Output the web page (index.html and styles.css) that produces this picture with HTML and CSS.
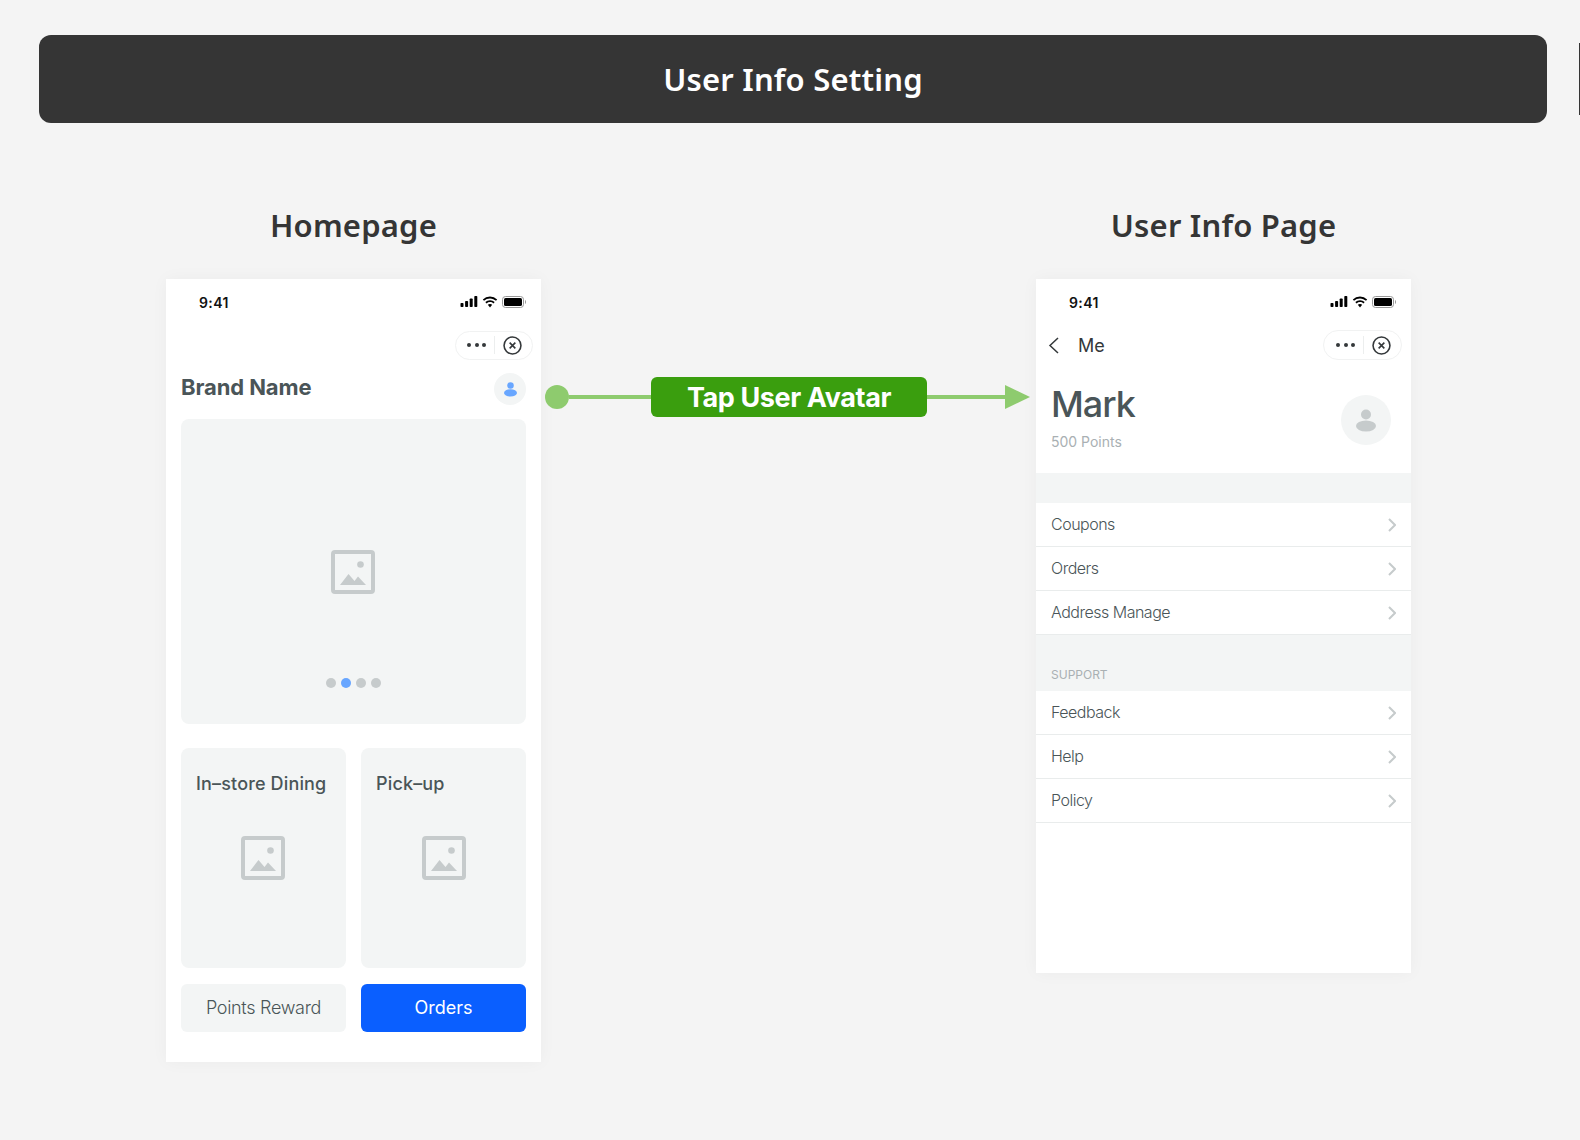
FILE: index.html
```html
<!DOCTYPE html>
<html lang="en">
<head>
<meta charset="utf-8">
<title>User Info Setting</title>
<link rel="stylesheet" href="styles.css">
</head>
<body>
<svg class="defs" width="0" height="0">
  <defs>
    <symbol id="signal" viewBox="0 0 17 11"><rect x="0" y="7" width="3" height="4" rx="0.8"/><rect x="4.6" y="5" width="3" height="6" rx="0.8"/><rect x="9.2" y="2.5" width="3" height="8.5" rx="0.8"/><rect x="13.8" y="0" width="3" height="11" rx="0.8"/></symbol>
    <symbol id="wifi" viewBox="0 0 16 12"><path d="M8 2.4c2.3 0 4.4.9 6 2.4l1.2-1.3A10.4 10.4 0 0 0 8 .6 10.4 10.4 0 0 0 .8 3.5L2 4.8a8.6 8.6 0 0 1 6-2.4z"/><path d="M8 6.1c1.3 0 2.5.5 3.4 1.3l1.3-1.3A6.8 6.8 0 0 0 8 4.2a6.8 6.8 0 0 0-4.7 1.9l1.3 1.3A5 5 0 0 1 8 6.1z"/><path d="M8 8c-.9 0-1.6.3-2.2.8L8 11.4l2.2-2.6C9.600 8.300 8.900 8 8 8z"/></symbol>
    <symbol id="battery" viewBox="0 0 24 12"><rect x="0.5" y="0.5" width="21" height="11" rx="3" fill="none" stroke="#999"/><rect x="2" y="2" width="18" height="8" rx="1.600" fill="#000"/><path d="M23 4v4c.6-.2 1-1 1-2s-.4-1.800-1-2z" fill="#999"/></symbol>
    <symbol id="picture" viewBox="0 0 44 44"><rect x="2" y="2" width="40" height="40" rx="2" fill="none" stroke="#c6cbcc" stroke-width="4"/><circle cx="29.500" cy="14.500" r="3.300" fill="#c6cbcc"/><path d="M9 35l8.500-11 6 7 3.500-4.500L35 35z" fill="#c6cbcc"/></symbol>
    <symbol id="close" viewBox="0 0 18 18"><circle cx="9" cy="9" r="8" fill="none" stroke="#34383a" stroke-width="1.500"/><path d="M6.300 6.300l5.400 5.400M11.700 6.300l-5.400 5.400" stroke="#34383a" stroke-width="1.500" fill="none"/></symbol>
    <symbol id="person" viewBox="0 0 20 24"><circle cx="10" cy="6.500" r="5"/><ellipse cx="10" cy="18" rx="10" ry="5.500"/></symbol>
    <symbol id="chevron" viewBox="0 0 8 14"><path d="M1 1l6 6-6 6" fill="none" stroke="#c6cbcc" stroke-width="2"/></symbol>
  </defs>
</svg>

<header class="top">
  <h1 class="banner">User Info Setting</h1>
  <div class="sliver"></div>
</header>

<main class="flow">
  <section class="col">
    <h2 class="screen-title">Homepage</h2>
    <div class="phone phone-home">
      <div class="status">
        <span class="time">9:41</span>
        <span class="status-icons">
          <svg class="i-signal"><use href="#signal"/></svg>
          <svg class="i-wifi"><use href="#wifi"/></svg>
          <svg class="i-battery"><use href="#battery"/></svg>
        </span>
      </div>
      <div class="nav nav-end">
        <div class="capsule capsule-home">
          <span class="more"><i></i><i></i><i></i></span>
          <span class="sep"></span>
          <svg class="i-close"><use href="#close"/></svg>
        </div>
      </div>
      <div class="brand-row">
        <span class="brand">Brand Name</span>
        <span class="avatar-sm"><svg class="i-person-sm"><use href="#person"/></svg></span>
      </div>
      <div class="hero">
        <svg class="i-picture hero-pic"><use href="#picture"/></svg>
        <div class="dots"><i></i><i class="on"></i><i></i><i></i></div>
      </div>
      <div class="cards">
        <div class="card">
          <span class="card-title">In–store Dining</span>
          <svg class="i-picture card-pic"><use href="#picture"/></svg>
        </div>
        <div class="card">
          <span class="card-title">Pick–up</span>
          <svg class="i-picture card-pic"><use href="#picture"/></svg>
        </div>
      </div>
      <div class="buttons">
        <div class="btn">Points Reward</div>
        <div class="btn btn-primary">Orders</div>
      </div>
    </div>
  </section>

  <div class="connector">
    <span class="dot"></span>
    <span class="line line-a"></span>
    <span class="tag">Tap User Avatar</span>
    <span class="line line-b"></span>
    <span class="head"></span>
  </div>

  <section class="col">
    <h2 class="screen-title">User Info Page</h2>
    <div class="phone phone-user">
      <div class="status">
        <span class="time">9:41</span>
        <span class="status-icons">
          <svg class="i-signal"><use href="#signal"/></svg>
          <svg class="i-wifi"><use href="#wifi"/></svg>
          <svg class="i-battery"><use href="#battery"/></svg>
        </span>
      </div>
      <div class="nav">
        <svg class="i-back" viewBox="0 0 11 17"><path d="M10 1L2 8.500l8 7.500" fill="none" stroke="#34383a" stroke-width="1.500"/></svg>
        <span class="nav-title">Me</span>
        <div class="capsule">
          <span class="more"><i></i><i></i><i></i></span>
          <span class="sep"></span>
          <svg class="i-close"><use href="#close"/></svg>
        </div>
      </div>
      <div class="profile">
        <div class="profile-text">
          <div class="name">Mark</div>
          <div class="points">500 Points</div>
        </div>
        <span class="avatar-lg"><svg class="i-person-lg"><use href="#person"/></svg></span>
      </div>
      <div class="gap"></div>
      <ul class="list">
        <li>Coupons<svg class="i-chevron"><use href="#chevron"/></svg></li>
        <li>Orders<svg class="i-chevron"><use href="#chevron"/></svg></li>
        <li>Address Manage<svg class="i-chevron"><use href="#chevron"/></svg></li>
      </ul>
      <div class="section-label">SUPPORT</div>
      <ul class="list">
        <li>Feedback<svg class="i-chevron"><use href="#chevron"/></svg></li>
        <li>Help<svg class="i-chevron"><use href="#chevron"/></svg></li>
        <li>Policy<svg class="i-chevron"><use href="#chevron"/></svg></li>
      </ul>
    </div>
  </section>
</main>
</body>
</html>
```
FILE: styles.css
```css
* { box-sizing: border-box; }
html, body { margin: 0; padding: 0; }
body {
  width: 1580px;
  height: 1140px;
  overflow: hidden;
  background: #f4f4f4;
  font-family: Inter, "Liberation Sans", sans-serif;
  color: #4a5558;
}
.defs { display: block; height: 0; }

.top {
  display: flex;
  align-items: center;
  gap: 32px;
  padding: 35px 0 0 39px;
}
.banner {
  width: 1508px;
  height: 88px;
  margin: 0;
  flex: none;
  border-radius: 12px;
  background: #353535;
  color: #fff;
  font: 600 31px/88px "Noto Sans", sans-serif;
  letter-spacing: 0.2px;
  text-align: center;
}
.sliver { width: 1px; height: 72px; flex: none; background: #353535; }

.flow {
  display: flex;
  align-items: flex-start;
  padding: 78px 0 0 166px;
}
.col { width: 375px; flex: none; }
.screen-title {
  height: 78px;
  margin: 0;
  color: #353535;
  font: 600 31px/48px "Noto Sans", sans-serif;
  letter-spacing: 0.2px;
  text-align: center;
}

.phone {
  background: #fff;
  box-shadow: 0 0 16px rgba(0, 0, 0, 0.04);
}
.phone-home { height: 783px; }
.phone-user { height: 694px; }

.status {
  display: flex;
  justify-content: space-between;
  align-items: center;
  height: 47px;
  padding: 0 15px 0 33px;
}
.time { font-size: 14px; font-weight: 600; color: #111; letter-spacing: 0.4px; }
.status-icons { display: flex; align-items: center; gap: 4px; margin-top: -2px; }
.status-icons svg { display: block; fill: #000; }
.i-signal { width: 18px; height: 11px; }
.i-wifi { width: 16px; height: 12px; }
.i-battery { width: 24px; height: 12px; }

.nav {
  display: flex;
  align-items: center;
  height: 38px;
  padding: 0 9px 0 12px;
}
.nav-end { justify-content: flex-end; }
.i-back { width: 11px; height: 17px; flex: none; }
.nav-title { margin-left: 19px; font-size: 18px; color: #34383a; flex: 1; }

.capsule {
  display: flex;
  align-items: center;
  width: 79px;
  height: 30px;
  padding-left: 12px;
  border: 1px solid #f1f2f2;
  border-radius: 15px;
  background: #fff;
}
.capsule-home { width: 78px; height: 29px; margin-right: -1px; padding-left: 11px; }
.more { display: flex; gap: 3.5px; }
.more i { width: 4px; height: 4px; border-radius: 50%; background: #34383a; }
.sep { width: 1px; height: 18px; margin: 0 8px; background: #eceeee; }
.i-close { width: 19px; height: 19px; }

.brand-row {
  display: flex;
  justify-content: space-between;
  align-items: center;
  height: 52px;
  padding: 0 15px;
  margin-top: -3px;
}
.brand { font-size: 22px; font-weight: 700; letter-spacing: -0.1px; color: #4a5558; }
.avatar-sm {
  display: flex;
  align-items: center;
  justify-content: center;
  width: 32px;
  height: 32px;
  margin-top: 4px;
  border-radius: 50%;
  background: #f3f5f5;
}
.i-person-sm { width: 13px; height: 16px; fill: #68a6ff; }

.hero {
  display: flex;
  flex-direction: column;
  align-items: center;
  height: 305px;
  margin: 6px 15px 0;
  padding-top: 131px;
  border-radius: 8px;
  background: #f3f5f5;
}
.i-picture { display: block; width: 44px; height: 44px; }
.hero-pic { margin-left: -1px; }
.dots { display: flex; gap: 5px; margin-top: 84px; }
.dots i { width: 10px; height: 10px; border-radius: 50%; background: #c6cbcc; }
.dots .on { background: #68a6ff; }

.cards {
  display: flex;
  gap: 15px;
  margin: 24px 15px 0;
}
.card {
  width: 165px;
  height: 220px;
  padding: 25px 15px 0;
  border-radius: 8px;
  background: #f3f5f5;
}
.card-title { display: block; height: 63px; font-size: 18px; line-height: 22px; font-weight: 500; letter-spacing: 0.15px; color: #4a5558; white-space: nowrap; }
.card-pic { margin-left: 45px; }
.card + .card .card-pic { margin-left: 46px; }

.buttons {
  display: flex;
  gap: 15px;
  margin: 16px 15px 0;
}
.btn {
  width: 165px;
  height: 48px;
  border-radius: 6px;
  background: #f3f5f5;
  font-size: 18px;
  font-weight: 300;
  letter-spacing: -0.3px;
  line-height: 48px;
  text-align: center;
  color: #4a5558;
}
.btn-primary { background: #0a5fff; color: #fff; font-weight: 400; letter-spacing: 0; }

.profile {
  display: flex;
  justify-content: space-between;
  align-items: flex-start;
  height: 109px;
  padding: 0 20px 0 15px;
}
.profile-text { padding-top: 16px; }
.name { font-size: 36px; line-height: 48px; font-weight: 500; color: #4a5558; letter-spacing: -1px; }
.points { margin-top: 4px; font-size: 14px; line-height: 20px; color: #a9b0b3; }
.avatar-lg {
  display: flex;
  align-items: center;
  justify-content: center;
  width: 50px;
  height: 50px;
  margin-top: 31px;
  border-radius: 50%;
  background: #f3f5f5;
}
.i-person-lg { width: 20px; height: 24px; fill: #c6cbcc; }

.gap { height: 30px; background: #f3f5f5; }
.list { margin: 0; padding: 0; list-style: none; }
.list li {
  display: flex;
  justify-content: space-between;
  align-items: center;
  height: 44px;
  padding: 0 15px 2px;
  border-bottom: 1px solid #e9ecec;
  font-size: 16px;
  font-weight: 300;
  letter-spacing: -0.5px;
  color: #4a5558;
}
.i-chevron { width: 8px; height: 14px; margin-top: 2px; }
.section-label {
  height: 56px;
  padding: 30px 15px 0;
  background: #f3f5f5;
  font-size: 12px;
  line-height: 20px;
  color: #a9b0b3;
}

.connector {
  display: flex;
  align-items: center;
  width: 495px;
  flex: none;
  height: 40px;
  padding-left: 4px;
  margin-top: 176px;
}
.dot { width: 24px; height: 24px; border-radius: 50%; background: #8ecb6e; flex: none; }
.line { height: 4px; background: #8ecb6e; flex: none; }
.line-a { width: 82px; }
.line-b { width: 78px; }
.tag {
  width: 276px;
  height: 40px;
  flex: none;
  border-radius: 6px;
  background: #3a9e0e;
  color: #fff;
  font-size: 27px;
  line-height: 41px;
  font-weight: 700;
  letter-spacing: -0.4px;
  text-align: center;
}
.head {
  width: 0;
  height: 0;
  flex: none;
  border-style: solid;
  border-width: 12px 0 12px 25px;
  border-color: transparent transparent transparent #8ecb6e;
}
```
